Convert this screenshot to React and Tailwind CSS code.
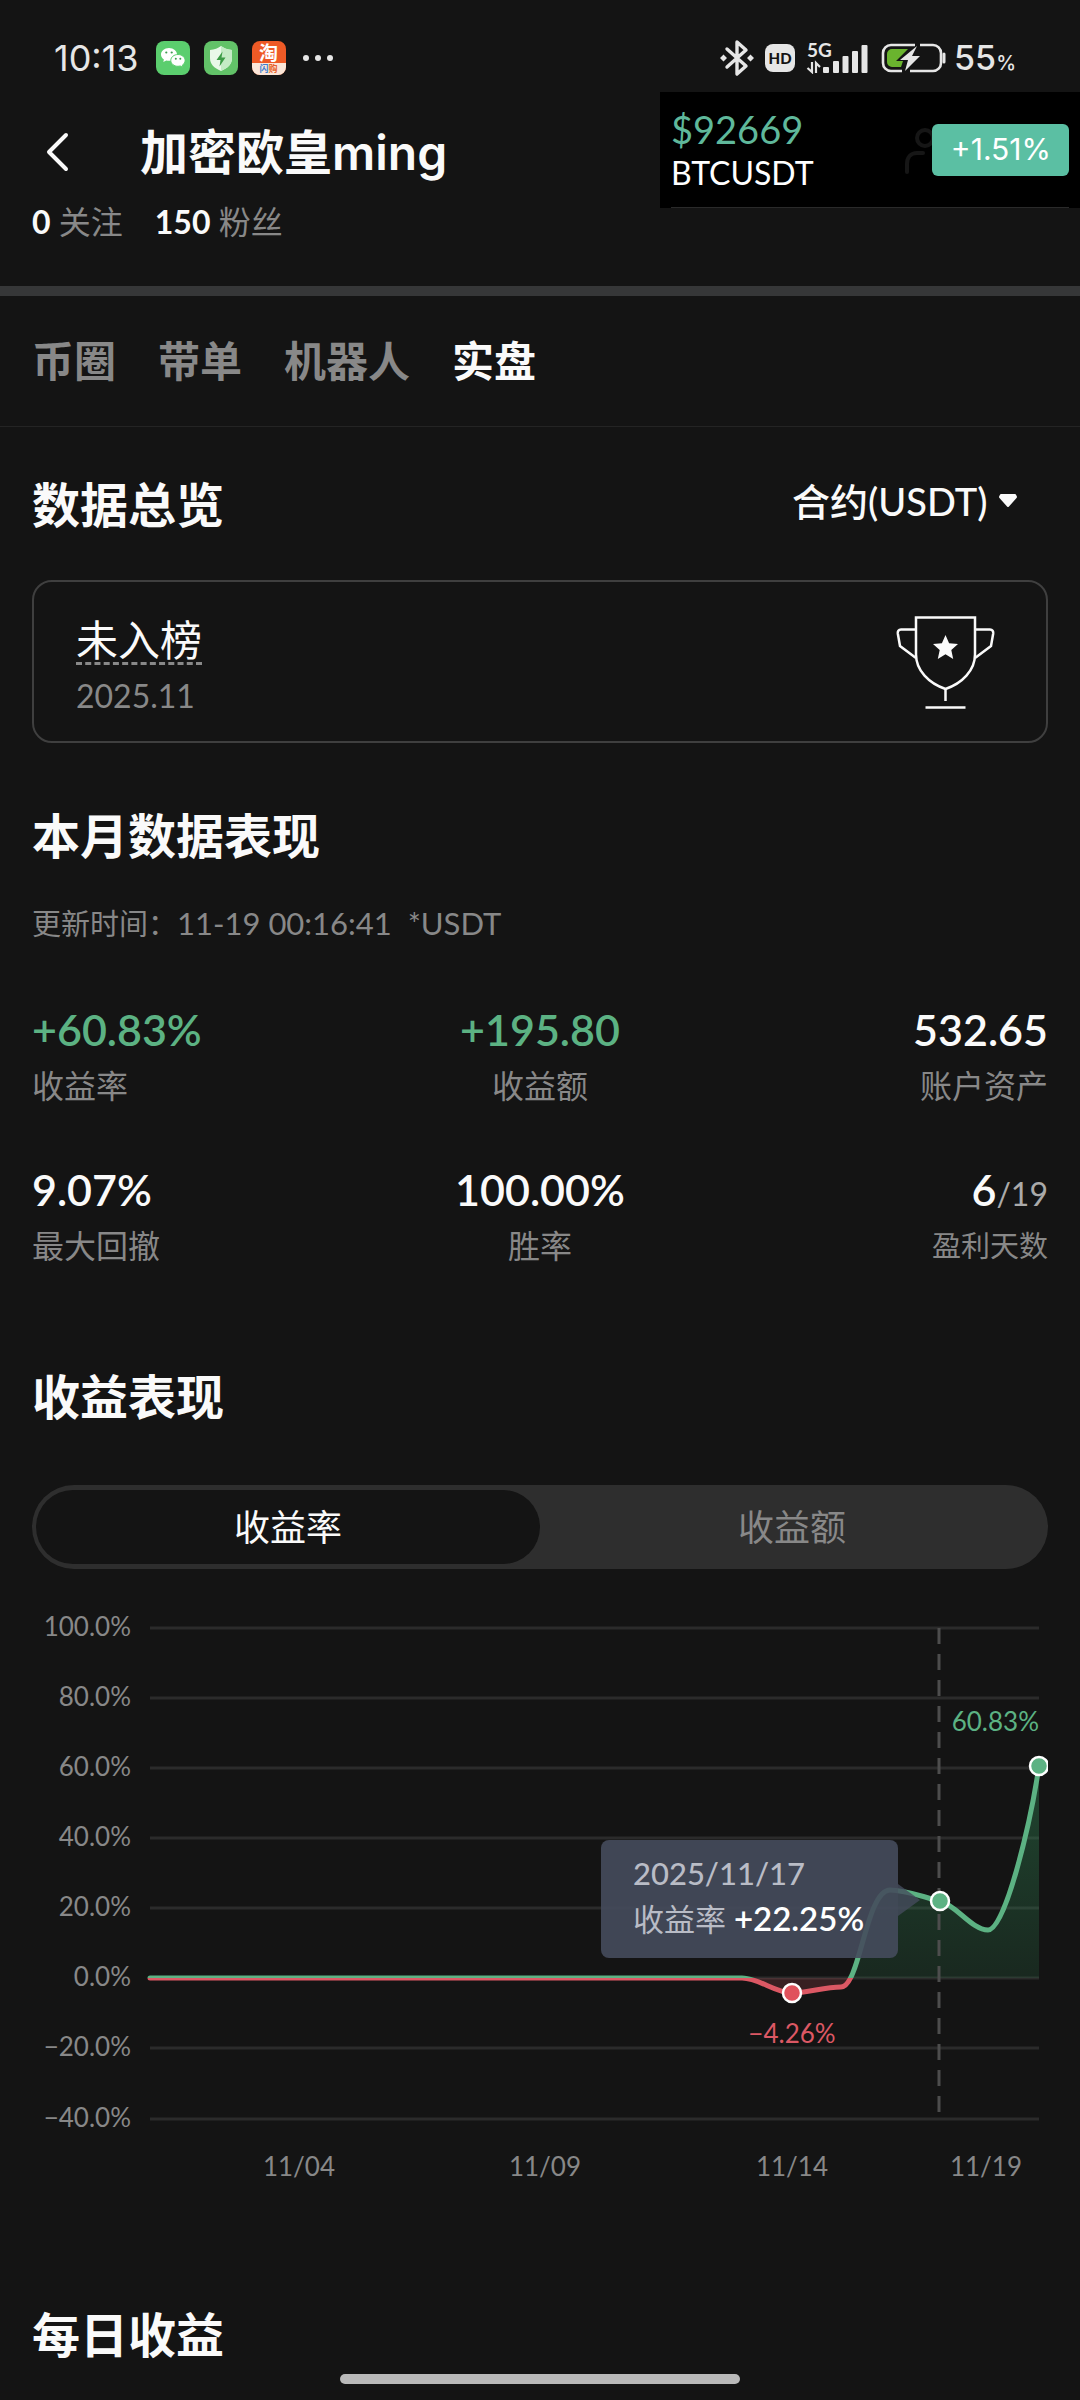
import { useState } from "react";

const TABS = ["币圈", "带单", "机器人", "实盘"];
const STATS = [
  { value: "+60.83%", label: "收益率", tone: "text-[#5cb283]" },
  { value: "+195.80", label: "收益额", tone: "text-[#5cb283]" },
  { value: "532.65", label: "账户资产", tone: "text-[#fafafa]" },
  { value: "9.07%", label: "最大回撤", tone: "text-[#fafafa]" },
  { value: "100.00%", label: "胜率", tone: "text-[#fafafa]" },
  { value: "6", extra: "/19", label: "盈利天数", tone: "text-[#fafafa]", small: true },
];
const ALIGN = ["items-start", "items-center", "items-end"];
const GRID = [
  { label: "100.0%", y: 37 },
  { label: "80.0%", y: 107 },
  { label: "60.0%", y: 177 },
  { label: "40.0%", y: 247 },
  { label: "20.0%", y: 317 },
  { label: "0.0%", y: 387 },
  { label: "−20.0%", y: 457 },
  { label: "−40.0%", y: 528 },
];
const DATES = [
  { label: "11/04", x: 267 },
  { label: "11/09", x: 513 },
  { label: "11/14", x: 760 },
  { label: "11/19", x: 954 },
];
const CURVE =
  "M118 387H710C727 387 743 402 760 402C776 402 792 396 809 396C828 396 834 299 858 299C874 299 891 306 908 310C924 314 940 339 956 339C973 339 998 235 1007 175";

function StatusBar() {
  return (
    <div className="flex h-[92px] items-center justify-between pt-6 pr-[64px] pl-[54px] text-[#e6e6e6]">
      <div className="flex items-center">
        <span className="font-['Inter'] text-[36px] leading-10">10:13</span>
        <div className="ml-[17px] flex gap-[14px]">
          <svg className="size-[34px]" viewBox="0 0 34 34" aria-hidden="true">
            <rect width="34" height="34" rx="8" fill="#5bce6e" />
            <path d="M13 7c-4.700 0-8 3-8 6.500 0 2 1.100 3.800 2.900 5L7.300 21l3-1.600c.9.200 1.800.4 2.700.4C17.600 19.800 21 17 21 13.500S17.600 7 13 7Z" fill="#fff" />
            <path d="M22 13.500c-4 0-7.200 2.600-7.200 5.900s3.200 5.900 7.200 5.900c.8 0 1.600-.1 2.300-.3l2.600 1.400-.6-2.200c1.700-1.100 2.800-2.800 2.800-4.800 0-3.300-3.200-5.900-7.100-5.900Z" fill="#fff" stroke="#5bce6e" strokeWidth="1" />
            <g fill="#3f9c50">
              <circle cx="10.300" cy="11.500" r="1.100" />
              <circle cx="15.700" cy="11.500" r="1.100" />
              <circle cx="19.800" cy="17.800" r="1" />
              <circle cx="24.300" cy="17.800" r="1" />
            </g>
          </svg>
          <svg className="size-[34px]" viewBox="0 0 34 34" aria-hidden="true">
            <rect width="34" height="34" rx="8" fill="#62c268" />
            <path d="M17 5c3 2.500 6.500 3.600 11 4v8c0 6-4 10-11 13C10 27 6 23 6 17V9c4.500-.4 8-1.500 11-4Z" fill="#e9f8e9" />
            <path d="M17 5c3 2.500 6.500 3.600 11 4v8c0 6-4 10-11 13Z" fill="#c4ebc5" />
            <path d="M18.500 10.500 12.500 19h4l-1 6.500 6-9h-4Z" fill="#3c9c46" />
          </svg>
          <div className="flex size-[34px] flex-col items-center overflow-hidden rounded-lg bg-[#ee5a26] font-bold" aria-hidden="true">
            <span className="h-[22px] text-[19px] leading-[23px] text-white">淘</span>
            <span className="h-3 w-full bg-[#fbe6d8] text-center text-[9px] leading-[12px] text-[#e8622c]">
              <span className="text-[#3f7fd0]">闪</span>购
            </span>
          </div>
        </div>
        <div className="ml-[17px] flex gap-[6px]">
          <i className="size-[6px] rounded-full bg-[#e6e6e6]" />
          <i className="size-[6px] rounded-full bg-[#e6e6e6]" />
          <i className="size-[6px] rounded-full bg-[#e6e6e6]" />
        </div>
      </div>
      <div className="flex items-center">
        <svg className="h-[38px] w-[34px]" viewBox="0 0 34 38" fill="none" aria-hidden="true">
          <path d="m7 10 19 17-9 8V3l9 8L7 28" stroke="#e6e6e6" strokeWidth="3.400" strokeLinejoin="round" strokeLinecap="round" />
          <path d="m3.500 15.500 3.500 3.500-3.500 3.500L0 19ZM30.500 15.500 34 19l-3.500 3.500L27 19Z" fill="#e6e6e6" />
        </svg>
        <span className="ml-[11px] flex h-7 w-[30px] items-center justify-center rounded-lg bg-[#e6e6e6] text-[15px] font-black text-[#141414]">HD</span>
        <div className="relative ml-[11px] h-8 w-[62px]">
          <span className="absolute top-0 left-[1px] text-[19px] leading-4 font-bold">5G</span>
          <svg className="h-full w-full" viewBox="0 0 62 32" aria-hidden="true">
            <g fill="#e6e6e6">
              <rect x="17" y="25" width="6" height="6" rx="1" />
              <rect x="27" y="19" width="6" height="12" rx="1" />
              <rect x="36.500" y="14" width="6" height="17" rx="1" />
              <rect x="46" y="9" width="6" height="22" rx="1" />
              <rect x="55.500" y="3" width="6" height="28" rx="1" />
            </g>
            <path d="M6 20v10l-4.500-4M10 31V21l4 4" fill="none" stroke="#e6e6e6" strokeWidth="2.200" />
          </svg>
        </div>
        <svg className="ml-[13px] h-[30px] w-[66px]" viewBox="0 0 66 30" fill="none" aria-hidden="true">
          <path d="M34 2H10a8 8 0 0 0-8 8v10a8 8 0 0 0 8 8h11M39 2h13a8 8 0 0 1 8 8v10a8 8 0 0 1-8 8H29" stroke="#e6e6e6" strokeWidth="2.600" />
          <path d="M27 6H11a5 5 0 0 0-5 5v8a5 5 0 0 0 5 5h9l2-6h-7Z" fill="#6ab42e" />
          <path d="M36 3 19 17h8l-3 11 15-15h-8Z" fill="#e6e6e6" />
          <path d="M63 11v8" stroke="#e6e6e6" strokeWidth="3" strokeLinecap="round" />
        </svg>
        <span className="ml-[7px] flex items-baseline pt-1 font-['Inter'] text-[34px] leading-10 font-medium">
          55<span className="text-[20px]">%</span>
        </span>
      </div>
    </div>
  );
}

function PriceTicker() {
  return (
    <aside className="absolute top-[92px] right-0 flex h-[116px] w-[420px] items-center justify-between bg-black pr-[11px] pl-[11px]">
      <div className="flex h-full w-full items-center justify-between border-b border-[#2a2a2a]">
        <div>
          <div className="text-[38px] leading-[46px] text-[#5fb89b]">$92669</div>
          <div className="text-[32px] leading-[42px] text-white">BTCUSDT</div>
        </div>
        <div className="relative">
          <svg className="absolute top-[3px] left-[-27px] h-12 w-11" viewBox="0 0 44 48" fill="none" stroke="#161616" strokeWidth="4" strokeLinecap="round" aria-hidden="true">
            <circle cx="20" cy="11" r="8" />
            <path d="M2 45v-8c0-7 4-11 10-11h6" />
          </svg>
          <span className="relative flex h-[52px] w-[137px] items-center justify-end rounded-md bg-[#5bbfa3] pr-[18px] font-['Inter'] text-[30px] text-white">+1.51%</span>
        </div>
      </div>
    </aside>
  );
}

function Chart() {
  return (
    <div className="relative mt-[22px]">
      <svg className="block w-full" viewBox="0 0 1016 600" role="img" aria-label="收益率">
        <defs>
          <clipPath id="gain"><rect x="0" y="0" width="1016" height="387" /></clipPath>
          <clipPath id="loss"><rect x="0" y="387" width="1016" height="213" /></clipPath>
          <linearGradient id="gainFill" gradientUnits="userSpaceOnUse" x1="0" y1="175" x2="0" y2="387">
            <stop offset="0" stopColor="#2f8453" stopOpacity="0.450" />
            <stop offset="1" stopColor="#2f8453" stopOpacity="0.180" />
          </linearGradient>
        </defs>
        {GRID.map((g) => (
          <g key={g.label}>
            <path d={`M118 ${g.y}H1007`} stroke="#2b2b2b" strokeWidth="3" />
            <text x="99" y={g.y + 8} textAnchor="end" fontSize="26" fill="#888">{g.label}</text>
          </g>
        ))}
        <path d={`${CURVE}V387Z`} fill="url(#gainFill)" clipPath="url(#gain)" />
        <path d={`${CURVE}V387Z`} fill="#e05a63" fillOpacity="0.180" clipPath="url(#loss)" />
        <path d="M907 37V528" stroke="#4d4d4d" strokeWidth="3" strokeDasharray="16 10" />
        <path d={CURVE} fill="none" stroke="#5cb283" strokeWidth="5" strokeLinecap="round" clipPath="url(#gain)" />
        <path d={CURVE} fill="none" stroke="#dc5864" strokeWidth="5" strokeLinecap="round" clipPath="url(#loss)" />
        <g stroke="#fff" strokeWidth="2.500">
          <circle cx="760" cy="402" r="9" fill="#e0525c" />
          <circle cx="908" cy="310" r="9" fill="#5cb283" />
          <circle cx="1007" cy="175" r="9" fill="#5cb283" />
        </g>
        <text x="1007" y="140" textAnchor="end" fontSize="26" fill="#5cb283">60.83%</text>
        <text x="760" y="452" textAnchor="middle" fontSize="26" fill="#dc5864">−4.26%</text>
        {DATES.map((d) => (
          <text key={d.label} x={d.x} y="585" textAnchor="middle" fontSize="26" fill="#888">{d.label}</text>
        ))}
      </svg>
      <div className="absolute top-[249px] left-[56%] h-[118px] w-[297px] rounded-lg bg-[#454b5c]/90 pt-[11px] pl-8 text-[31px] text-[#b9bcc6]">
        <div className="leading-[44px] font-medium">2025/11/17</div>
        <div className="leading-[46px]">
          收益率 <span className="text-[33px] font-semibold text-white">+22.25%</span>
        </div>
        <svg className="absolute top-[44px] left-full h-8 w-[22px]" viewBox="0 0 22 32" aria-hidden="true">
          <path d="M0 0 22 16 0 32Z" fill="#454b5c" fillOpacity="0.800" />
        </svg>
      </div>
    </div>
  );
}

export default function App() {
  const [tab, setTab] = useState("实盘");
  const [mode, setMode] = useState("收益率");
  return (
    <div className="relative min-h-screen bg-[#141414] font-['Lato','Noto_Sans_CJK_SC',sans-serif] text-[#fafafa]">
      <StatusBar />
      <header className="pl-8">
        <div className="flex h-[112px] items-center pt-2">
          <button aria-label="返回" className="ml-[14px] h-10 w-6">
            <svg className="h-full w-full" viewBox="0 0 24 40" fill="none" stroke="#fafafa" strokeWidth="4" strokeLinecap="round" strokeLinejoin="round" aria-hidden="true">
              <path d="M20 3 3 20l17 17" />
            </svg>
          </button>
          <h1 className="ml-[70px] text-[48px] leading-[60px] font-bold">
            加密欧皇<span className="font-['Inter'] font-semibold">ming</span>
          </h1>
        </div>
        <div className="flex h-9 items-center gap-8 text-[32px] text-[#888]">
          <span><b className="text-[#fafafa]">0</b> 关注</span>
          <span><b className="text-[#fafafa]">150</b> 粉丝</span>
        </div>
      </header>
      <PriceTicker />
      <div className="mt-[46px] h-[10px] bg-[#363738]" />
      <nav className="flex h-[131px] items-center gap-[42px] border-b border-[#242424] px-8">
        {TABS.map((t) => (
          <button key={t} onClick={() => setTab(t)} className={`text-[42px] leading-[60px] font-bold ${t === tab ? "text-[#fafafa]" : "text-[#888]"}`}>
            {t}
          </button>
        ))}
      </nav>
      <main className="px-8 pt-12 pb-[34px]">
        <div className="flex h-[60px] items-start justify-between">
          <h2 className="text-[48px] leading-[60px] font-bold">数据总览</h2>
          <label className="mr-[30px] flex items-center gap-[10px]">
            <select aria-label="账户类型" className="appearance-none bg-transparent text-[38px] leading-[52px] font-medium outline-none">
              <option>合约(USDT)</option>
            </select>
            <svg className="h-[14px] w-5" viewBox="0 0 20 14" aria-hidden="true">
              <path d="M3 1h14l1 2-8 9-8-9Z" fill="#fafafa" stroke="#fafafa" strokeWidth="2" strokeLinejoin="round" />
            </svg>
          </label>
        </div>
        <section className="mt-[45px] flex h-[163px] items-center justify-between rounded-[20px] border-2 border-[#3f3f3f] pt-[2px] pr-[50px] pl-[42px]">
          <div className="pt-3">
            <a href="#rank" className="block w-fit border-b-3 border-dashed border-[#888] text-[42px] leading-[44px]">未入榜</a>
            <div className="mt-2 text-[32px] leading-[46px] text-[#888]">2025.11</div>
          </div>
          <svg className="h-[96px] w-[100px]" viewBox="0 0 100 96" fill="none" stroke="#fafafa" strokeWidth="2.500" aria-hidden="true">
            <path d="M20 2.500h59v37c0 16-13 29-29.500 34.500C33 68.500 20 55.500 20 39.500Z" />
            <path d="M20 14.500H5c-2.500 0-3.500 2-3.200 4L4 31l16 12M79 14.500h15c2.500 0 3.500 2 3.200 4L95 31 79 43M49.500 74v12M29.500 92.500h40" />
            <path d="m49.500 20 3.600 8.200 8.900.9-6.700 6 1.900 8.800-7.700-4.600-7.700 4.600 1.900-8.800-6.700-6 8.900-.9Z" fill="#fafafa" stroke="none" />
          </svg>
        </section>

        <h2 className="mt-[63px] text-[48px] leading-[60px] font-bold">本月数据表现</h2>
        <p className="mt-[37px] h-10 text-[29px] leading-10 text-[#888]">
          更新时间：<span className="text-[31px]">11-19 00:16:41&nbsp; *USDT</span>
        </p>
        <section className="mt-[59px] grid grid-cols-3 gap-y-14">
          {STATS.map((s, i) => (
            <div key={s.label} className={`flex flex-col ${ALIGN[i % 3]}`}>
              <div className={`h-14 text-[43px] leading-[56px] font-semibold ${s.tone}`}>
                {s.value}
                {s.extra && <span className="text-[32px] font-normal text-[#aaa]">{s.extra}</span>}
              </div>
              <div className={`mt-2 leading-10 text-[#888] ${s.small ? "text-[29px]" : "text-[32px]"}`}>{s.label}</div>
            </div>
          ))}
        </section>

        <h2 className="mt-[101px] text-[48px] leading-[60px] font-bold">收益表现</h2>
        <div className="mt-[58px] grid h-[84px] grid-cols-2 rounded-full bg-[#2e2e2e] px-1 py-[5px]">
          {["收益率", "收益额"].map((m) => (
            <button key={m} onClick={() => setMode(m)} className={`rounded-full text-[36px] ${m === mode ? "bg-[#141414] text-[#fafafa]" : "text-[#888]"}`}>
              {m}
            </button>
          ))}
        </div>
        <Chart />
        <h2 className="mt-[114px] text-[48px] leading-[60px] font-bold">每日收益</h2>
      </main>
      <div className="fixed bottom-4 left-1/2 h-[10px] w-[400px] -translate-x-1/2 rounded-full bg-[#b9b9b9]" />
    </div>
  );
}
